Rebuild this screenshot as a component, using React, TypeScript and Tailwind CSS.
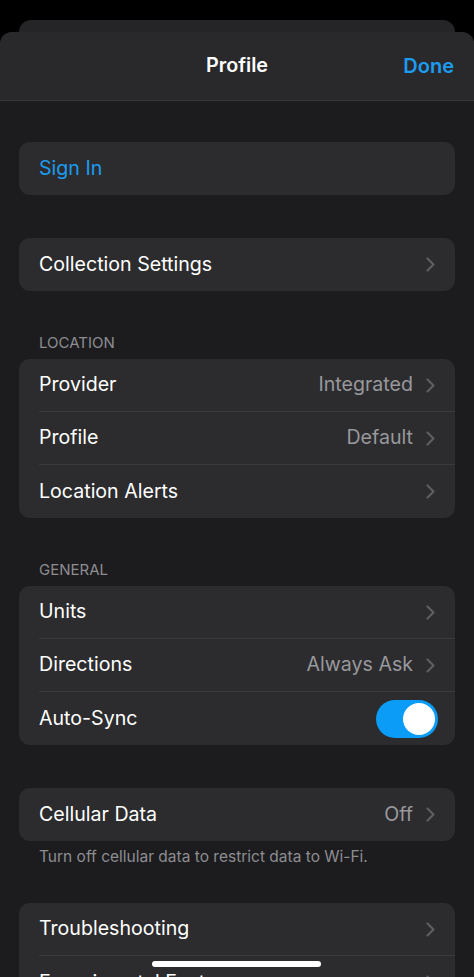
import React from 'react';

const Chevron: React.FC = () => (
  <svg width="9" height="15" viewBox="0 0 9 15" fill="none" className="shrink-0">
    <path d="M1.5 1.5 L7.5 7.5 L1.5 13.5" stroke="#5d5d62" strokeWidth="2.2" strokeLinecap="round" strokeLinejoin="round" />
  </svg>
);

type RowProps = {
  label: string;
  value?: string;
  toggle?: boolean;
  chevron?: boolean;
  blue?: boolean;
  last?: boolean;
};

const Row: React.FC<RowProps> = ({ label, value, toggle, chevron = true, blue, last }) => (
  <div className="flex h-[53px] items-center pl-[20px]">
    <div className={`flex h-full flex-1 items-center pr-[20px] ${last ? '' : 'border-b border-[#3a3a3c]'}`}>
      <span className={`flex-1 text-[19.6px] ${blue ? 'text-[#1b9cf0]' : 'text-white'}`}>{label}</span>
      {value && <span className="mr-[13px] text-[19.6px] text-[#98989d]">{value}</span>}
      {toggle ? (
        <div className="-mr-[3px] flex h-[38px] w-[62px] items-center justify-end rounded-full bg-[#0a9cf6] p-[3px]">
          <div className="h-[32px] w-[32px] rounded-full bg-white" />
        </div>
      ) : (
        chevron && <Chevron />
      )}
    </div>
  </div>
);

const Card: React.FC<{ children: React.ReactNode }> = ({ children }) => (
  <div className="overflow-hidden rounded-[11px] bg-[#2c2c2e]">{children}</div>
);

const Header: React.FC<{ text: string }> = ({ text }) => (
  <div className="mb-[8px] mt-[43px] h-[17px] pl-[20px] text-[15px] leading-[17px] text-[#8d8d92]">{text}</div>
);

export default function App() {
  return (
    <div
      className="relative h-[977px] w-[474px] overflow-hidden bg-black"
      style={{ fontFamily: 'Inter, "Noto Sans", sans-serif' }}
    >
      <div className="mx-[19px] mt-[20px] h-[24px] rounded-t-[12px] bg-[#252527]" />
      <div className="-mt-[12px] rounded-t-[12px] bg-[#1c1c1e]">
        <div className="relative flex h-[69px] items-center justify-center rounded-t-[12px] border-b border-[#363638] bg-[#29292b]">
          <span className="text-[19.8px] font-semibold text-white">Profile</span>
          <span className="absolute right-[20px] text-[20px] font-semibold text-[#1b9cf0]">Done</span>
        </div>
        <div className="px-[19px] pt-[41px]">
          <Card>
            <Row label="Sign In" blue chevron={false} last />
          </Card>
          <div className="mt-[43px]">
            <Card>
              <Row label="Collection Settings" last />
            </Card>
          </div>

          <Header text="LOCATION" />
          <Card>
            <Row label="Provider" value="Integrated" />
            <Row label="Profile" value="Default" />
            <Row label="Location Alerts" last />
          </Card>

          <Header text="GENERAL" />
          <Card>
            <Row label="Units" />
            <Row label="Directions" value="Always Ask" />
            <Row label="Auto-Sync" toggle last />
          </Card>

          <div className="mt-[43px]">
            <Card>
              <Row label="Cellular Data" value="Off" last />
            </Card>
          </div>
          <div className="mt-[7px] h-[18px] pl-[20px] text-[15.5px] leading-[18px] text-[#8d8d92]">
            Turn off cellular data to restrict data to Wi-Fi.
          </div>

          <div className="mt-[37px]">
            <Card>
              <Row label="Troubleshooting" />
              <Row label="Experimental Features" last />
            </Card>
          </div>
        </div>
      </div>
      <div className="absolute left-[152px] top-[961px] h-[6px] w-[169px] rounded-full bg-white" />
    </div>
  );
}
